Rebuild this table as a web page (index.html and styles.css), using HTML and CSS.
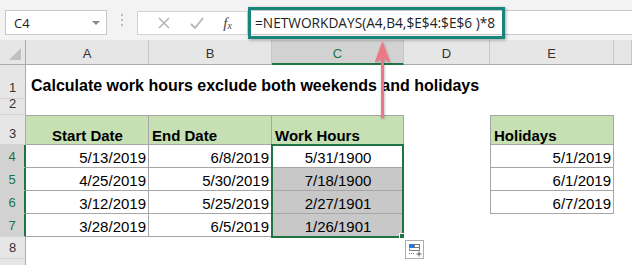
FILE: index.html
```html
<!DOCTYPE html>
<html>
<head>
<meta charset="utf-8">
<title>NETWORKDAYS work hours</title>
<link rel="stylesheet" href="styles.css">
</head>
<body>
<div class="app">
  <div class="toolbar">
    <div class="namebox"><span class="name">C4</span><span class="dd"></span></div>
    <div class="sep"><i></i><i></i><i></i></div>
    <div class="fnbtns">
      <svg class="ico" width="14" height="14" viewBox="0 0 14 14"><path d="M2 2L12 12M12 2L2 12" stroke="#b5b5b5" stroke-width="1.5" fill="none"/></svg>
      <svg class="ico" width="16" height="14" viewBox="0 0 16 14"><path d="M2 8L6 12L14 2" stroke="#b5b5b5" stroke-width="1.8" fill="none"/></svg>
      <span class="fx">f<sub>x</sub></span>
    </div>
    <div class="fbar">
      <span class="ftext">=NETWORKDAYS(A4,B4,$E$4:$E$6 )*8</span>
      <div class="hl"></div>
    </div>
  </div>
  <div class="sheet">
    <div class="corner"><span class="tri"></span></div>
    <div class="ch">A</div>
    <div class="ch">B</div>
    <div class="ch sel">C</div>
    <div class="ch">D</div>
    <div class="ch">E</div>
    <div class="ch"></div>

    <div class="rh">1</div>
    <div class="c title span6">Calculate work hours exclude both weekends and holidays</div>

    <div class="rh">2</div>
    <div class="c span6"></div>

    <div class="rh">3</div>
    <div class="c t hd m">Start Date</div>
    <div class="c t hd">End Date</div>
    <div class="c t hd">Work Hours</div>
    <div class="c"></div>
    <div class="c t hd e">Holidays</div>
    <div class="c"></div>

    <div class="rh sel">4</div>
    <div class="c t r">5/13/2019</div>
    <div class="c t r">6/8/2019</div>
    <div class="c t m active">5/31/1900
      <div class="selbox">
        <span class="handle"></span>
        <span class="qa">
          <svg width="19" height="19" viewBox="0 0 19 19">
            <rect x="0.5" y="0.5" width="18" height="18" fill="#fff" stroke="#adadad"/>
            <rect x="4" y="4" width="5" height="4" fill="#2b78e4"/>
            <rect x="9.5" y="4.5" width="5" height="3" fill="none" stroke="#7a7a7a"/>
            <path d="M4.5 8.5V10.5H14.5V8" stroke="#7a7a7a" fill="none"/>
            <path d="M4 13.5H10" stroke="#7a7a7a" stroke-dasharray="1 1"/>
            <path d="M14 11.5V16.5M11.5 14H16.5" stroke="#555"/>
          </svg>
        </span>
      </div>
    </div>
    <div class="c"></div>
    <div class="c t r e">5/1/2019</div>
    <div class="c"></div>

    <div class="rh sel">5</div>
    <div class="c t r">4/25/2019</div>
    <div class="c t r">5/30/2019</div>
    <div class="c t m g">7/18/1900</div>
    <div class="c"></div>
    <div class="c t r e">6/1/2019</div>
    <div class="c"></div>

    <div class="rh sel">6</div>
    <div class="c t r">3/12/2019</div>
    <div class="c t r">5/25/2019</div>
    <div class="c t m g">2/27/1901</div>
    <div class="c"></div>
    <div class="c t r e">6/7/2019</div>
    <div class="c"></div>

    <div class="rh sel">7</div>
    <div class="c t r">3/28/2019</div>
    <div class="c t r">6/5/2019</div>
    <div class="c t m g">1/26/1901</div>
    <div class="c span3"></div>

    <div class="rh">8</div>
    <div class="c span6"></div>

    <div class="rh">9</div>
    <div class="c span6"></div>
  </div>
  <svg class="arrow" width="18" height="84" viewBox="0 0 18 84">
    <defs>
      <filter id="sh" x="-50%" y="-20%" width="200%" height="140%">
        <feDropShadow dx="0.5" dy="1" stdDeviation="1" flood-color="#000" flood-opacity="0.3"/>
      </filter>
    </defs>
    <g filter="url(#sh)">
      <path d="M7.5 18V80" stroke="#ee7786" stroke-width="3"/>
      <path d="M7.5 3L15.5 25L7.5 20L-0.5 25Z" fill="#ee7786"/>
    </g>
  </svg>
</div>
</body>
</html>
```
FILE: styles.css
```css
* { box-sizing: border-box; }
body { margin: 0; background: #fff; }
.app {
  position: relative;
  width: 632px;
  height: 265px;
  overflow: hidden;
  font-family: "Liberation Sans", Arial, sans-serif;
}
.toolbar {
  display: flex;
  align-items: flex-start;
  height: 40px;
  background: #f3f3f3;
}
.namebox {
  display: flex;
  align-items: center;
  justify-content: space-between;
  margin: 10px 0 0 5px;
  width: 102px;
  height: 25px;
  padding: 0 6px 0 8px;
  background: #fff;
  border: 1px solid #c8c8c8;
  font-family: "Open Sans", sans-serif;
  font-size: 13px;
  color: #222;
}
.dd {
  width: 0; height: 0;
  border-left: 4px solid transparent;
  border-right: 4px solid transparent;
  border-top: 4px solid #8a8a8a;
}
.sep {
  width: 30px;
  height: 40px;
  display: flex;
  flex-direction: column;
  align-items: center;
  justify-content: center;
  gap: 3px;
}
.sep i { width: 2px; height: 2px; background: #bdbdbd; display: block; }
.fnbtns {
  display: flex;
  align-items: center;
  justify-content: space-around;
  margin-top: 11px;
  width: 111px;
  height: 24px;
  padding: 0 6px 0 10px;
  background: #fff;
  border: 1px solid #d2d2d2;
}
.ico { display: block; }
.fx {
  font-family: "Liberation Serif", serif;
  font-style: italic;
  font-size: 15px;
  color: #444;
}
.fx sub { font-size: 10px; vertical-align: -1px; }
.fbar {
  position: relative;
  flex: 1;
  margin: 10px 0 0 2px;
  height: 25px;
  display: flex;
  align-items: center;
  padding-left: 4px;
  background: #fff;
  border: 1px solid #c8c8c8;
  border-right: none;
  font-family: "Open Sans", sans-serif;
  font-size: 13.7px;
  color: #222;
}
.hl {
  position: absolute;
  left: -3px;
  top: -4px;
  width: 257px;
  height: 32px;
  border: 3px solid #17857a;
  box-shadow: 1px 1px 3px rgba(0,0,0,0.35);
}
.sheet {
  display: grid;
  grid-template-columns: 26px 123px 123px 132px 86px 124px 18px;
  grid-template-rows: 25px 34px 16px 30px 23px 23px 23px 23px 22px 22px;
  font-size: 15px;
  line-height: 17px;
  color: #000;
}
.corner {
  background: #e6e6e6;
  border-right: 1px solid #ababab;
  border-bottom: 1px solid #ababab;
  position: relative;
}
.tri {
  position: absolute;
  right: 4px;
  bottom: 4px;
  width: 0; height: 0;
  border-left: 12px solid transparent;
  border-bottom: 12px solid #c0c0c0;
}
.ch {
  background: #e6e6e6;
  border-right: 1px solid #c8c8c8;
  border-bottom: 1px solid #ababab;
  display: flex;
  align-items: flex-end;
  justify-content: center;
  padding-bottom: 2px;
  font-size: 13px;
  color: #333;
}
.ch.sel {
  background: #d2d2d2;
  color: #217346;
  border-bottom: 2px solid #217346;
  padding-bottom: 1px;
}
.rh {
  background: #e6e6e6;
  border-right: 1px solid #ababab;
  border-bottom: 1px solid #d4d4d4;
  display: flex;
  align-items: flex-end;
  justify-content: center;
  padding-bottom: 2px;
  font-size: 13px;
  color: #333;
}
.rh.sel {
  background: #d2d2d2;
  color: #217346;
  border-right: 2px solid #217346;
}
.c {
  display: flex;
  align-items: flex-end;
  padding: 0 2px 1px 3px;
  white-space: nowrap;
}
.span6 { grid-column: span 6; }
.span3 { grid-column: span 3; }
.title { font-weight: bold; font-size: 16px; padding-left: 5px; padding-bottom: 5px; }
.t {
  border-right: 1px solid #a6a6a6;
  border-bottom: 1px solid #a6a6a6;
}
.hd {
  background: #c6e0b4;
  border-top: 1px solid #a6a6a6;
  font-weight: bold;
  padding-bottom: 0;
}
.e { border-left: 1px solid #a6a6a6; }
.r { justify-content: flex-end; }
.m { justify-content: center; }
.g { background: #c8c8c8; }
.active { position: relative; }
.selbox {
  position: absolute;
  left: -1px;
  top: -1px;
  width: 133px;
  height: 94px;
  border: 2px solid #217346;
}
.handle {
  position: absolute;
  right: -3px;
  bottom: -3px;
  width: 6px;
  height: 6px;
  background: #217346;
  border: 1px solid #fff;
}
.qa {
  position: absolute;
  right: -22px;
  bottom: -23px;
  width: 19px;
  height: 19px;
}
.qa svg { display: block; }
.arrow {
  position: absolute;
  left: 375px;
  top: 38px;
}
```
